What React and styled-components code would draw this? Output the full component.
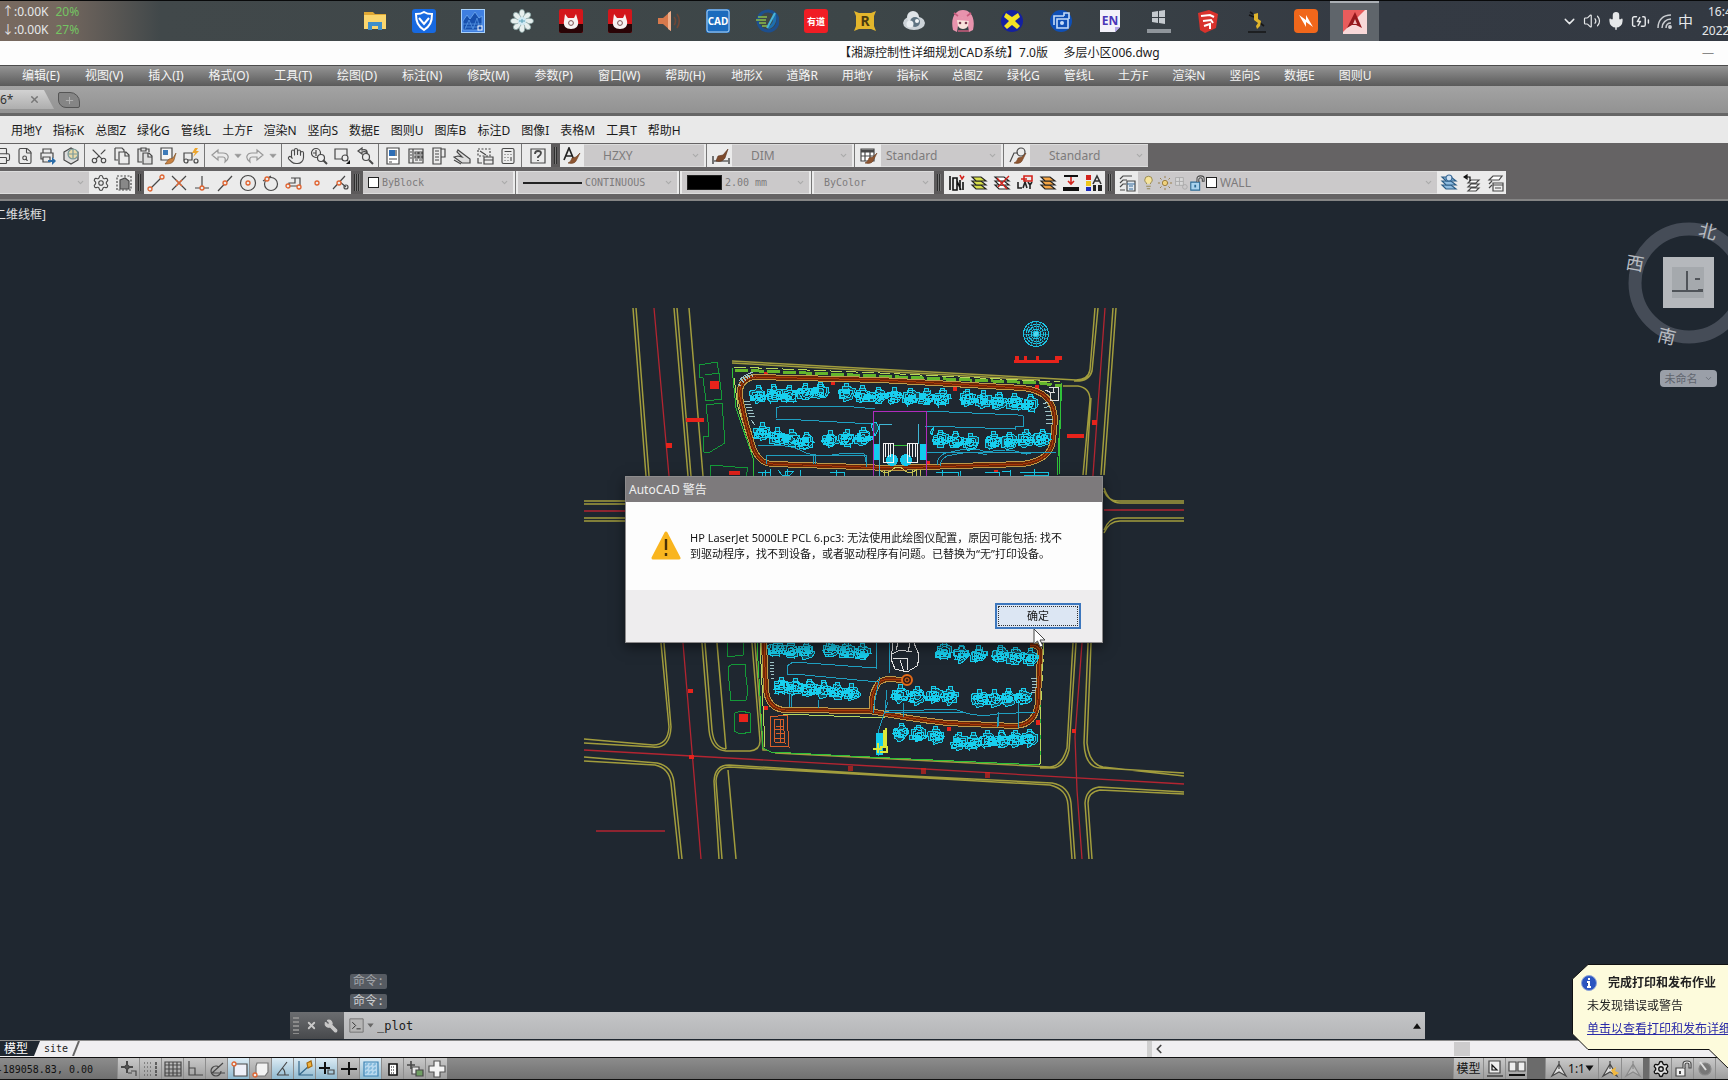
import React, { useState } from "react";
import styled, { createGlobalStyle, css } from "styled-components";
import {
  Printer,
  FileSearch,
  Scissors,
  Undo2,
  Redo2,
  Hand,
  Settings,
  Calculator,
  ChevronDown,
  ChevronLeft,
  Volume2,
  Mic,
  BatteryCharging,
  Wrench,
  X,
  Plus,
  LockOpen,
  Lightbulb,
  Sun,
} from "lucide-react";

const GlobalStyle = createGlobalStyle`
  * {
    box-sizing: border-box;
  }
  body {
    margin: 0;
    overflow: hidden;
    background: #1f2730;
    font-family: "Noto Sans", "Noto Sans CJK SC", sans-serif;
    font-size: 12px;
    line-height: 16px;
  }
  button, select, input {
    font: inherit;
    color: inherit;
    margin: 0;
    padding: 0;
    border: 0;
    background: none;
    border-radius: 0;
  }
  svg {
    display: block;
    flex: none;
  }
`;

const Page = styled.div`
  display: flex;
  flex-direction: column;
  height: 100vh;
  overflow: hidden;
`;

/* ---------- taskbar ---------- */

const Taskbar = styled.header`
  display: flex;
  flex: none;
  height: 41px;
  border-top: 1px solid #08090a;
  color: #e6e8ea;
  background: linear-gradient(90deg, #77695f 0, #75685f 60px, #41484a 160px, #3d4648 50%, #343a43 80%, #333942);
`;

const NetInfo = styled.div`
  width: 350px;
  padding: 2px 0 0 2px;
  line-height: 18px;
  white-space: pre;

  b {
    color: #74c462;
    font-weight: normal;
    padding-left: 7px;
  }
`;

const TaskButton = styled.button`
  display: flex;
  align-items: center;
  justify-content: center;
  width: 49px;
  ${(p) =>
    p.$active &&
    css`
      background: #5f656b;
      border-top: 2px solid #a9aeb4;
    `}
`;

const Tray = styled.div`
  display: flex;
  align-items: center;
  gap: 5px;
  margin-left: auto;
  font-size: 15px;
`;

const Clock = styled.div`
  width: 26px;
  margin-left: 4px;
  font-size: 12px;
  line-height: 19px;
  white-space: nowrap;

  div:first-child {
    padding-left: 6px;
  }
`;

/* ---------- window chrome ---------- */

const TitleBar = styled.div`
  display: flex;
  flex: none;
  height: 24px;
  line-height: 24px;
  padding: 0 16px 0 839px;
  background: #fdfdfd;
  color: #1b1b1b;
  white-space: pre;

  button {
    margin-left: auto;
    width: 10px;
    color: #888;
  }
`;

const MainMenu = styled.nav`
  display: flex;
  flex: none;
  gap: 26px;
  height: 21px;
  padding-left: 22px;
  border-top: 1px solid #4c4c4c;
  background: linear-gradient(#949494, #5a5a5a);
  color: #f4f4f4;
`;

const MenuGroup = styled.div`
  display: flex;
  gap: ${(p) => p.$gap}px;

  button {
    line-height: 18px;
    white-space: nowrap;
  }
`;

const FileTabs = styled.div`
  display: flex;
  flex: none;
  align-items: flex-end;
  height: 30px;
  padding-bottom: 4px;
  border-bottom: 3px solid #666;
  background: linear-gradient(#a3a3a3, #929292);
`;

const FileTab = styled.div`
  display: flex;
  align-items: center;
  gap: 16px;
  width: 54px;
  height: 19px;
  background: linear-gradient(#d2d2d2, #aeaeae);
  clip-path: polygon(0 0, 44px 0, 54px 100%, 0 100%);
  color: #333;
`;

const NewTab = styled.button`
  display: flex;
  align-items: center;
  justify-content: center;
  width: 22px;
  height: 16px;
  margin: 0 0 1px 4px;
  border: 1px solid #555 !important;
  border-radius: 2px 10px 2px 8px !important;
  background: #858585 !important;
  color: #b5b5b5 !important;
`;

const SubMenu = styled.nav`
  display: flex;
  flex: none;
  gap: 11px;
  height: 27px;
  padding: 2px 0 0 11px;
  background: #e9e9e9;
  color: #1a1a1a;

  button {
    white-space: nowrap;
  }
`;

const ToolArea = styled.div`
  display: flex;
  flex: none;
  flex-direction: column;
  gap: 4px;
  height: 58px;
  padding-top: 1px;
  border-bottom: 2px solid #858585;
  background: #656364;
`;

const ToolRow = styled.div`
  display: flex;
  height: 23px;
`;

const Bar = styled.div`
  display: flex;
  flex: none;
  height: 23px;
  margin-left: ${(p) => (p.$clipped ? "-10px" : 0)};
  background: #ebebeb;
`;

const Tool = styled.button`
  display: flex;
  align-items: center;
  justify-content: center;
  width: ${(p) => p.$w || 23}px;
  color: #4a4a4a;
  opacity: ${(p) => (p.disabled ? 0.5 : 1)};
`;

const Sep = styled.span`
  width: 5px;
  border-left: 2px solid #ebebeb;
  border-right: 2px solid #ebebeb;
  background: #777;
`;

const Grip = styled.span`
  flex: none;
  width: ${(p) => p.$w || 10}px;
  height: 23px;
  border: 3px solid #5c5a5b;
  background: repeating-linear-gradient(90deg, #2f2f2f 0 1px, #777 1px 2px);
`;

const ComboBox = styled.label`
  display: flex;
  align-items: center;
  flex: none;
  gap: 1px;
  width: ${(p) => p.$w}px;
  height: 23px;
  padding: 0 4px 0 ${(p) => p.$pad || 5}px;
  border-top: 1px solid #dcdcdc;
  border-bottom: 1px solid #dcdcdc;
  background: #cbc9ca;
  color: #7d7b7c;

  select {
    flex: 1;
    min-width: 0;
    appearance: none;
    font-family: ${(p) => (p.$mono ? '"DejaVu Sans Mono", monospace' : "inherit")};
    font-size: ${(p) => (p.$mono ? 10 : 12)}px;
  }
`;

const Swatch = styled.span`
  flex: none;
  width: ${(p) => p.$w}px;
  height: ${(p) => p.$h}px;
  margin-right: 2px;
  border: 1px solid #222;
  background: ${(p) => p.$color};
`;

function Combo({ label, value, children, ...rest }) {
  return (
    <ComboBox {...rest}>
      {children}
      <select aria-label={label} defaultValue={value}>
        <option>{value}</option>
      </select>
      <ChevronDown size={9} strokeWidth={3} color="#aaa" />
    </ComboBox>
  );
}

/* ---------- canvas ---------- */

const Canvas = styled.main`
  position: relative;
  display: flex;
  flex: 1;
  flex-direction: column;
  justify-content: space-between;
  min-height: 0;
  overflow: hidden;
  background: #1f2730;
`;

const ViewLabel = styled.div`
  display: flex;
  justify-content: flex-end;
  width: 46px;
  padding-top: 6px;
  overflow: hidden;
  white-space: nowrap;
  color: #e0e0e0;
`;

const Plan = styled.svg`
  position: absolute;
  left: 580px;
  top: 99px;
`;

const CubeBox = styled.svg`
  position: absolute;
  right: -32px;
  top: 9px;
`;

const UcsButton = styled.button`
  position: absolute;
  right: 11px;
  top: 169px;
  display: flex;
  align-items: center;
  justify-content: center;
  gap: 6px;
  width: 57px;
  height: 17px;
  border-radius: 4px !important;
  background: #9a9fa8 !important;
  color: #5f646d !important;
  font-size: 11px !important;
`;

const CommandDock = styled.div`
  position: relative;
  display: flex;
  flex-direction: column;
  align-items: flex-start;
  gap: 5px;
  padding: 0 303px 1px 290px;
`;

const History = styled.div`
  margin-left: 60px;
  padding: 0 3px 0 3px;
  height: 15px;
  border-radius: 2px;
  background: #565b62;
  color: ${(p) => (p.$dim ? "#a4a7ab" : "#cfd1d3")};
  line-height: 15px;
  font-family: "DejaVu Sans Mono", "Noto Sans CJK SC", monospace;
`;

const CommandBar = styled.div`
  display: flex;
  align-items: center;
  align-self: stretch;
  height: 27px;
  margin-top: -2px;
  background: linear-gradient(#c4c5c7, #b4b5b7);
`;

const CommandHandle = styled.div`
  display: flex;
  align-items: center;
  gap: 7px;
  width: 54px;
  height: 27px;
  padding-left: 3px;
  background: linear-gradient(#6b6d70, #47494c);
  color: #c8c8c8;
`;

const Dots = styled.span`
  width: 6px;
  height: 17px;
  background: repeating-linear-gradient(#8b8b8b 0 2px, transparent 2px 4px);
`;

const Prompt = styled.label`
  display: flex;
  flex: 1;
  align-items: center;
  gap: 3px;
  padding: 0 4px 0 5px;

  input {
    flex: 1;
    outline: none;
    color: #1c1c1c;
    font-family: "DejaVu Sans Mono", monospace;
  }
`;

/* ---------- layout tabs + status bar ---------- */

const LayoutStrip = styled.div`
  display: flex;
  flex: none;
  height: 17px;
  border-top: 1px solid #8a8a8a;
  background: #f0eff1;
`;

const LayoutTab = styled.button`
  width: ${(p) => p.$w}px;
  height: 15px;
  line-height: 14px !important;
  font-family: "DejaVu Sans Mono", "Noto Sans CJK SC", monospace !important;
  ${(p) =>
    p.$active
      ? css`
          background: #1f2730 !important;
          color: #fff !important;
          padding-right: 8px !important;
          clip-path: polygon(0 0, 100% 0, 34px 100%, 0 100%);
        `
      : css`
          font-size: 10px !important;
          color: #222 !important;
        `}
`;

const ScrollTrack = styled.div`
  display: flex;
  align-items: center;
  width: 581px;
  margin-left: auto;
  border-left: 5px solid #cfcfcf;
  color: #444;
`;

const Thumb = styled.span`
  width: 16px;
  height: 14px;
  margin-left: 288px;
  background: #cdcccd;
`;

const StatusBar = styled.footer`
  display: flex;
  flex: none;
  height: 23px;
  border-top: 1px solid #111;
  border-bottom: 1px solid #111;
  background: linear-gradient(#8c8c8c, #707070);
  color: #111;
`;

const Coords = styled.div`
  display: flex;
  justify-content: flex-end;
  width: 117px;
  padding-right: 24px;
  line-height: 24px;
  font-family: "DejaVu Sans Mono", monospace;
  font-size: 10px;
  white-space: pre;
`;

const StatusButton = styled.button`
  display: flex;
  align-items: center;
  justify-content: center;
  width: ${(p) => p.$w || 22}px;
  border-left: 1px solid #8d8d8d !important;
  background: ${(p) =>
    p.$on ? "linear-gradient(#dcebf4, #8fb9cf)" : "linear-gradient(#c9c9c9, #9d9d9d)"} !important;
`;

const Gap = styled.span`
  width: ${(p) => p.$w}px;
  background: #6b6b6b;
`;

const StatusRight = styled.div`
  display: flex;
  margin-left: auto;
`;

/* ---------- dialog, balloon ---------- */

const Overlay = styled.div`
  position: fixed;
  inset: 0;
  display: flex;
  align-items: center;
  justify-content: center;
  padding-top: 39px;
`;

const Dialog = styled.section`
  display: flex;
  flex-direction: column;
  width: 478px;
  border: 1px solid #8d8b8c;
  background: #fdfdfd;
  box-shadow: 0 4px 12px rgba(0, 0, 0, 0.5);
  color: #151515;

  h1 {
    margin: 0;
    padding: 0 3px;
    background: #7d7a7c;
    color: #f0f0f0;
    font-size: 12px;
    font-weight: normal;
    line-height: 25px;
  }
`;

const DialogBody = styled.div`
  display: flex;
  gap: 9px;
  padding: 28px 25px;

  svg {
    margin-top: 1px;
  }
  p {
    margin: 0;
    font-size: 11px;
    line-height: 16px;
    white-space: pre;
  }
`;

const DialogFooter = styled.div`
  display: flex;
  justify-content: flex-end;
  padding: 13px 21px;
  background: #eeedee;
`;

const OkButton = styled.button`
  width: 86px;
  height: 26px;
  border: 2px solid #3d77bd !important;
  background: #dce6f3 !important;
  outline: 1px dotted #333;
  outline-offset: -4px;
  font-size: 11px !important;
`;

const Cursor = styled.svg`
  position: absolute;
  left: 1033px;
  top: 628px;
`;

const Balloon = styled.aside`
  position: fixed;
  right: 0;
  bottom: 12px;
  width: 156px;
  height: 104px;
`;

const BalloonShape = styled.svg`
  position: absolute;
  left: 0;
  top: 0;
`;

const BalloonText = styled.div`
  position: relative;
  display: flex;
  flex-direction: column;
  gap: 7px;
  padding: 11px 0 0 15px;
  white-space: nowrap;
  overflow: hidden;
  color: #222;

  h2 {
    display: flex;
    align-items: center;
    gap: 11px;
    margin: 0 0 0 -6px;
    font-size: 12px;
    line-height: 16px;
  }
  p {
    margin: 0;
  }
  a {
    color: #2a2aa8;
  }
`;

/* ---------- icon drawings ---------- */

const Tile = ({ children, color, r = 3 }) => (
  <svg width="24" height="24" viewBox="0 0 24 24">
    {color && <rect width="24" height="24" rx={r} fill={color} />}
    {children}
  </svg>
);

const TileText = ({ size = 10, fill = "#fff", y = 16, children }) => (
  <text x="12" y={y} textAnchor="middle" fontSize={size} fontWeight="bold" fill={fill}>
    {children}
  </text>
);

const Bear = () => (
  <Tile color="#d3161b" r={2}>
    <path d="M0 15h24v7q0 2-2 2H2q-2 0-2-2z" fill="#2a0406" />
    <path d="M5 12l1-7 3 4h6l2-4 2 7c1 5-2 8-7 8s-8-3-7-8z" fill="#f7f2f2" />
    <circle cx="12" cy="14" r="2.4" fill="none" stroke="#7a5050" />
  </Tile>
);

const taskIcons = [
  ["文件资源管理器", <Tile><path d="M1 3h9l2 2h11v15H1z" fill="#e0a834" /><path d="M1 6h22v14H1z" fill="#fbd66e" /><path d="M5 21v-8h14v8h-4v-4H9v4z" fill="#3f8ecb" /></Tile>],
  ["电脑管家", <Tile color="#1769e0"><path d="M12 3c3 2 5 2 8 2 0 8-2 12-8 16-6-4-8-8-8-16 3 0 5 0 8-2z" fill="none" stroke="#fff" strokeWidth="2" /><path d="M7 9l5 6 5-6" fill="none" stroke="#fff" strokeWidth="2" /></Tile>],
  ["地形", <Tile color="#3f7fe0" r={0}><rect x=".5" y=".5" width="23" height="23" fill="none" stroke="#a9d2fb" /><path d="M2 21V12l4-6 3 4 5-7 4 6 3-2v9l-3 5z" fill="#1750ad" stroke="#79b3f2" strokeWidth=".7" /><path d="M4 20l4-9 4 9 4-11 3 11M2 15h19M4 18h16" fill="none" stroke="#5d9ee9" strokeWidth=".7" /><rect x="17" y="17" width="4" height="4" fill="#1750ad" stroke="#fff" /></Tile>],
  ["花瓣", <Tile>{[0, 45, 90, 135, 180, 225, 270, 315].map((a) => (<ellipse key={a} cx="12" cy="5" rx="2.8" ry="4.4" fill="#e6efee" stroke="#7f9c9c" strokeWidth=".7" transform={`rotate(${a} 12 12)`} />))}<circle cx="12" cy="12" r="4" fill="#cfe9f3" /><path d="M9 12h6M12 10v4" stroke="#59a0b5" /></Tile>],
  ["录屏", <Bear />],
  ["录屏大师", <Bear />],
  ["音量", <Tile><path d="M1 9h5l8-7v20l-8-7H1z" fill="#d8794c" /><path d="M11 4l3-2v20l-3-2z" fill="#f1b08c" /><path d="M17 8c2 2 2 6 0 8M20 5c3 4 3 10 0 14" fill="none" stroke="#704636" strokeWidth="1.6" /></Tile>],
  ["CAD", <Tile color="#1b6bbd" r={2}><rect x="1" y="1" width="22" height="22" rx="2" fill="none" stroke="#b6d7f4" /><TileText size={10}>CAD</TileText></Tile>],
  ["迅雷", <Tile><circle cx="13" cy="12" r="10" fill="none" stroke="#1d4f8e" strokeWidth="3" /><path d="M13 19c6-2 8-8 6-14" fill="none" stroke="#1d6fb0" strokeWidth="3" /><path d="M20 4L12 19" stroke="#49b5d8" strokeWidth="2" /><path d="M3 8h9M1 11h10M4 14h7M7 17h5" stroke="#8bbd4b" strokeWidth="1.6" /></Tile>],
  ["有道", <Tile color="#f01d24"><TileText size={9}>有道</TileText></Tile>],
  ["R", <Tile><path d="M1 2l5 2h12l5-2-2 5v10l2 5-5-2H6l-5 2 2-5V7z" fill="#e3b62c" /><TileText size={14} fill="#4a3b10" y={17}>R</TileText></Tile>],
  ["百度网盘", <Tile><ellipse cx="12" cy="14" rx="11" ry="7" fill="#ccd3d8" /><circle cx="11" cy="8" r="6" fill="#dfe4e8" /><circle cx="13" cy="13" r="5" fill="#5f7482" /><circle cx="8" cy="15" r="3.5" fill="#e9eef1" /><circle cx="15" cy="12" r="2" fill="#f3f6f8" /></Tile>],
  ["角色", <Tile><path d="M2 21C-1 8 5 1 12 1s13 7 10 20l-4 2-1-6H7l-1 6z" fill="#e893ad" /><path d="M6 11c2-3 10-3 12 0l-1 6c-2 4-8 4-10 0z" fill="#fae3dc" /><path d="M5 11l4-6 2 4 3-4 5 7" fill="#e893ad" /><circle cx="9" cy="14" r="1.3" fill="#7b3c50" /><circle cx="15" cy="14" r="1.3" fill="#7b3c50" /><path d="M3 4l4 3M20 4l-4 3M7 22h11" stroke="#c75b7c" strokeWidth="1.6" /></Tile>],
  ["工具X", <Tile><circle cx="12" cy="12" r="11" fill="#1420a0" /><path d="M6 4l6 4 6-4 2 4-5 4 5 5-3 3-5-4-5 4-3-3 5-5-5-4z" fill="#f4e223" /></Tile>],
  ["同步", <Tile><circle cx="12" cy="12" r="11" fill="#0f4fb5" /><path d="M5 16V7h10M8 10h11v9H8zM15 7V4h5v6" fill="none" stroke="#c5dbf8" strokeWidth="1.6" /><circle cx="13" cy="14" r="2" fill="#c5dbf8" /></Tile>],
  ["输入法", <Tile><path d="M2 1h20v17l-5 5H2z" fill="#f3f1fa" /><path d="M17 23v-5h5z" fill="#b4a5ea" /><TileText size={12} fill="#4a35b8">EN</TileText></Tile>],
  ["系统", <Tile><path d="M5 3l6-1v6H5zM12 2l6-1v7h-6zM5 9h6v5l-6-1zM12 9h6v6l-6-1z" fill="#c5cacf" /><rect y="20" width="24" height="4" fill="#8f959b" /></Tile>],
  ["SketchUp", <Tile><path d="M2 4l11-3 9 4-2 14-11 5-5-3z" fill="#d8322c" /><path d="M5 7l9-1 4 2M7 12l8-1 2 3M8 17l6-2v5" fill="none" stroke="#fff" strokeWidth="2" /></Tile>],
  ["脚本", <Tile><path d="M4 6l5 2M5 3l3 2M15 14l4 3M3 23h18" stroke="#161616" strokeWidth="1.6" /><path d="M9 5l4-1v6l3 2-1 5-3 3-1-3 2-3-4-3z" fill="#e1b52b" /></Tile>],
  ["视频", <Tile color="#f0671b" r={4}><path d="M5 6l7 5V6l7 12-7-5v5z" fill="#fff" /></Tile>],
  ["AutoCAD", <Tile color="#e95c5c" r={0}><path d="M0 22L22 0h2v24H0z" fill="#f8d8d8" /><path d="M12 2l7 16-6-3H9l-5 3z" fill="#96181c" /><path d="M12 9l2 5h-4z" fill="#f0b9b9" /></Tile>],
];

const Ico = ({ children, s = 18, ...rest }) => (
  <svg width={s} height={s} viewBox="0 0 18 18" fill="none" stroke="#484848" strokeWidth="1.2" {...rest}>
    {children}
  </svg>
);

const Node = ({ x, y, r = 2 }) => <circle cx={x} cy={y} r={r} fill="#ebebeb" stroke="#e0632f" strokeWidth="1.3" />;

const Brush = () => <path d="M17 6l-4 4-4 1c-1 3-2 4-4 5 4 1 7 0 8-2l4-8z" fill="#8e5530" stroke="#6a3c1e" strokeWidth=".6" />;

const Layers = ({ fill = "#fff", stroke = "#222", children }) => (
  <Ico>
    {[11, 7, 3].map((y) => (
      <path key={y} d={`M2 ${y}h9l5 4H6z`} fill={fill} stroke={stroke} />
    ))}
    {children}
  </Ico>
);

const openSnaps = [
  ["端点", <Ico><path d="M4 14L14 4" /><Node x={3} y={15} /><Node x={15} y={3} /></Ico>],
  ["交点", <Ico><path d="M2 2l14 14M16 2L2 16" /><path d="M6 6l6 6M12 6l-6 6" stroke="#e0632f" /></Ico>],
  ["垂足", <Ico><path d="M9 2v12M2 14h14" /><Node x={9} y={14} /></Ico>],
  ["中点", <Ico><path d="M2 17L16 2" /><Node x={9} y={9} /></Ico>],
  ["圆心", <Ico><circle cx="9" cy="9" r="7.5" /><Node x={9} y={9} /></Ico>],
  ["切点", <Ico><circle cx="9" cy="10" r="6.5" /><path d="M1 7l8-5" /><Node x={5} y={5} /></Ico>],
  ["插入点", <Ico><path d="M6 4h9v8H4V9h6V4" /><Node x={3} y={12} /><Node x={14} y={13} /></Ico>],
  ["节点", <Ico><Node x={9} y={9} /></Ico>],
  ["最近点", <Ico><path d="M2 15L14 2M9 8l6 5" /><Node x={8} y={9} /><circle cx="15" cy="13" r="2" /></Ico>],
];

const layerTools = [
  ["图层表", <Ico stroke="#111" strokeWidth="1.6"><path d="M3 2v14M6 4h4v12H6zM13 6v10M16 8v8M10 7l4 9" /><path d="M13 1l2 4 2-3" stroke="#d3231c" /></Ico>],
  ["图层", <Layers fill="#d9e04b" />],
  ["关闭图层", <Layers><path d="M4 4l10 11M16 2L5 13" stroke="#d3231c" strokeWidth="1.4" /></Layers>],
  ["锁定", <Ico stroke="#222"><path d="M2 8v6h4M7 14l2-6 2 6M12 8l2 3 2-3M14 11v4" strokeWidth="1.6" /><path d="M8 2h8v5H8zM5 5h6" stroke="#d3231c" strokeWidth="1.6" /></Ico>],
  ["合并", <Layers fill="#f5a646" />],
  ["下移", <Ico><path d="M2 2h14" stroke="#111" strokeWidth="2" /><path d="M9 3v7M6 7l3 3 3-3" stroke="#d3231c" strokeWidth="1.6" /><path d="M1 15h16" stroke="#111" strokeWidth="4" /></Ico>],
  ["颜色", <Ico stroke="none"><path d="M1 1h5v5H1z" fill="#d3231c" /><path d="M1 7h5v5H1z" fill="#eec51a" /><path d="M1 13h5v4H1z" fill="#1b2ab8" /><path d="M8 11h3v6H8zM13 11h4v6h-4z" fill="#222" /><path d="M8 10l4-8 4 8M10 7h4" stroke="#333" strokeWidth="1.6" /></Ico>],
];

const statusTools = [
  ["推断约束", 0, <Ico><path d="M7 1v12M1 7h12" strokeWidth="2" /><path d="M11 11h5v5M8 13h4" /><circle cx="7" cy="7" r="2" fill="#555" /></Ico>],
  ["捕捉", 0, <Ico><path d="M2 3h9M2 7h9M2 11h9M2 15h9" strokeDasharray="1 2" /><path d="M14 2v14" strokeWidth="1.6" strokeDasharray="3 1" /></Ico>],
  ["栅格", 0, <Ico><path d="M1 2h16v14H1zM5 2v14M9 2v14M13 2v14M1 5h16M1 9h16M1 13h16" /></Ico>],
  ["正交", 0, <Ico><path d="M3 1v14h14M3 8h6v7" /></Ico>],
  ["极轴", 0, <Ico><path d="M3 13h14M4 13L15 3" /><circle cx="8" cy="11" r="5" strokeDasharray="26 6" /></Ico>],
  ["对象捕捉", 1, <Ico><path d="M4 4h13v12H4z" fill="#eef0f8" /><Node x={4} y={4} /></Ico>],
  ["三维对象捕捉", 0, <Ico><path d="M5 3h11v9l-3 4H4V6z" fill="#f3f3f3" stroke="#777" /><Node x={3} y={15} /></Ico>],
  ["对象追踪", 1, <Ico><path d="M3 15L13 2M3 15h12M8 8c2 1 3 4 3 7" /></Ico>],
  ["动态UCS", 1, <Ico><path d="M3 1v14h14M3 15l10-9" stroke="#35688a" /><path d="M11 3l4-2 1 5-4 2z" fill="#efb23c" stroke="#a86a10" /></Ico>],
  ["动态输入", 1, <Ico><path d="M7 2v12M1 8h11" stroke="#111" strokeWidth="2" /><path d="M10 10h6v4h-6z" /></Ico>],
  ["线宽", 0, <Ico><path d="M9 2v13M1 9h16" stroke="#111" strokeWidth="2" /></Ico>],
  ["透明度", 1, <Ico><path d="M2 2h14v14H2z" fill="#b7d8ee" stroke="#3c83b3" /><path d="M3 5h12M3 9h12M3 13h12M5 3v12M9 3v12M13 3v12" stroke="#6faed6" strokeDasharray="2 2" /></Ico>],
  ["快捷特性", 0, <Ico><path d="M5 4h8v11H5z" fill="#fff" stroke="#111" strokeWidth="1.6" /><path d="M7 7h4M7 10h4M7 13h4" stroke="#111" strokeDasharray="1 1" /></Ico>],
  ["选择循环", 0, <Ico><path d="M5 1v8M1 5h8" strokeWidth="1.6" /><path d="M6 7h7v7H6z" fill="#e9e9e9" /><path d="M10 10h7v6h-7z" fill="#6f9e63" /></Ico>],
  ["注释监视器", 0, <Ico><path d="M6 1h6v5h5v6h-5v5H6v-5H1V6h5z" fill="#f4f4f4" stroke="#555" /></Ico>],
];

/* ---------- site plan ---------- */

function makeRandom(seed) {
  let s = seed;
  return () => {
    s = (s * 16807) % 2147483647;
    return s / 2147483647;
  };
}

// a row of housing units between two points, each one a tangle of plan linework
function housingPath(x1, y1, x2, y2, seed) {
  const rnd = makeRandom(seed);
  const count = Math.max(2, Math.round((x2 - x1) / 15));
  const step = (x2 - x1) / count;
  let d = "";
  for (let i = 0; i < count; i++) {
    const cx = x1 + step * (i + 0.5);
    const cy = y1 + ((y2 - y1) * (i + 0.5)) / count + (rnd() - 0.5) * 2;
    [
      [8, 7],
      [6, 5],
      [3, 3],
    ].forEach(([rx, ry]) => {
      for (let k = 0; k < 16; k++) {
        const a = (k / 16) * Math.PI * 2;
        const j = 0.8 + rnd() * 0.4;
        const px = Math.round(cx + Math.cos(a) * rx * j);
        const py = Math.round(cy + Math.sin(a) * ry * j);
        d += k === 0 ? `M${px} ${py}` : k % 2 ? `H${px}V${py}` : `L${px} ${py}`;
      }
      d += "z";
    });
    // rooms
    for (let k = 0; k < 6; k++) {
      const px = Math.round(cx - 8 + rnd() * 12);
      const py = Math.round(cy - 5 + rnd() * 7);
      d += `M${px} ${py}h${2 + Math.round(rnd() * 3)}v3h-4z`;
    }
    d += `M${Math.round(cx - 2)} ${Math.round(cy - 6)}v-4h4v4`;
  }
  return d;
}

const housing = [
  [750, 397, 828, 391],
  [838, 394, 950, 399],
  [959, 399, 1038, 404],
  [755, 432, 813, 443],
  [822, 442, 871, 436],
  [932, 440, 978, 443],
  [985, 443, 1050, 437],
  [768, 649, 813, 651],
  [822, 650, 870, 654],
  [935, 652, 987, 656],
  [993, 655, 1037, 659],
  [774, 687, 858, 693],
  [892, 695, 958, 697],
  [972, 700, 1030, 698],
  [892, 733, 944, 738],
  [952, 743, 1036, 739],
];

const yellowRoads = [
  "M633 308L646 476M636 308L649 476M674 308L688 476M677 308L691 476M689 308L703 476",
  "M584 501H626M584 504H626M584 518H626M584 521H626",
  "M661 643L669 727Q668 745 653 745L584 739M664 643L671 727Q670 749 653 747L584 743",
  "M702 643L709 730Q711 750 726 751H750Q760 750 760 741L752 643M705 643L712 730Q714 748 726 749M717 643L726 749M755 643L763 750H767",
  "M584 757L657 763Q672 766 674 782L682 859M584 761L655 765Q669 768 671 783L679 859",
  "M722 859L716 781Q717 767 730 767L1050 785Q1067 789 1068 805L1072 859M719 859L714 781Q715 765 729 765L890 775L1052 783Q1069 786 1071 803L1075 859M728 770L736 859",
  "M1073 643L1067 748Q1062 766 1050 767L775 753M1076 643L1069 750Q1064 769 1050 768H1040",
  "M1088 643L1084 743Q1085 768 1101 768L1184 773M1091 643L1087 743Q1089 764 1103 767L1184 776",
  "M1184 792L1099 787Q1086 789 1085 803L1089 859M1184 794L1100 790Q1088 792 1088 803L1092 859",
  "M1095 308L1090 370Q1088 380 1076 380L1040 378L732 361M1098 308L1092 371Q1089 382 1074 381",
  "M1063 386H1078Q1090 388 1090 400L1083 475M1091 398L1086 475M1113 308L1101 475M1116 308L1104 475",
  "M1104 491Q1108 501 1118 501H1184M1104 488Q1109 503 1120 503H1184M1104 530Q1109 518 1118 518H1184M1104 533Q1109 521 1120 521H1184",
  "M732 363L1040 380",
];

const loopRoads = [
  "M755 377Q738 379 740 397L745 420L753 447Q759 464 773 464L890 468L1023 464Q1051 460 1053 440L1055 420Q1054 391 1023 388L880 380Z",
  "M764 643L766 690Q768 709 785 710L870 711Q910 719 947 723L1015 726Q1037 725 1038 700L1040 652Q1040 645 1030 645",
  "M872 711Q870 697 876 687Q879 679 890 679L902 680",
];

function SitePlan() {
  return (
    <Plan width="610" height="570" viewBox="580 300 610 570" fill="none" shapeRendering="crispEdges">
      <g stroke="#a29d3d" strokeWidth="1.5" shapeRendering="auto">
        {yellowRoads.map((d) => (
          <path key={d} d={d} />
        ))}
      </g>
      <g stroke="#b32531" strokeWidth="1.3" shapeRendering="auto">
        <path d="M654 308L669 476L683 643L701 859M584 511H626M1104 510H1184M584 750L890 767L1184 784" />
        <path d="M1105 308L1093 475L1082 643L1075 737L1077 790L1082 859M596 831H665" />
      </g>
      <g fill="#e8231b">
        <path d="M686 418h18v4h-18zM710 381h9v8h-9zM729 471h11v4h-11zM1067 434h17v4h-17zM739 714h9v8h-9zM764 706h4v4h-4z" />
        <path d="M1014 360h45v3h-45zM1015 356h4v5h-4zM1024 356h3v5h-3zM1036 356h3v5h-3zM1055 356h7v4h-7zM666 443h6v5h-6zM688 689h5v4h-5zM689 755h5v4h-5z" />
        <path d="M764 372h4v4h-4zM831 381h4v4h-4zM953 387h4v4h-4zM1035 385h4v4h-4zM1092 420h5v5h-5zM1072 729h4v4h-4zM947 727h4v4h-4zM1036 720h4v5h-4zM994 470h4v3h-4zM927 461h3v3h-3z" />
        <path d="M848 766h5v5h-5zM921 768h5v6h-5zM985 772h5v6h-5z" opacity=".6" />
      </g>
      <g stroke="#149a38">
        <path d="M699 365l18-3 2 11 3 26-16 2-3-23-4-1zM705 375l14-2M706 405l16-2 3 40-15 9h-6l-1-15 6-1-1-14zM710 465l38 3-2 8h-36z" />
        <path d="M727 643l1 14 15-2 1-12M728 667l5-3h12v6l3 22-2 8-15 1-2-20zM735 713l6-2 9 2 1 19-11 2-6-3z" />
        <path d="M732 368L736 408L753 458V476M757 643L763 748L771 752L890 758L1040 765M1041 650L1040 765M1062 383L1057 475M1061 384L1059 475" stroke="#2fc23a" />
      </g>
      <path d="M735 370L1040 383L1062 386" stroke="#63b52c" strokeWidth="3" strokeDasharray="13 3" />
      <path d="M734 367L880 373L1060 382M1044 643L1041 700L1040 765" stroke="#b9d65c" strokeDasharray="12 4" />
      <path d="M734 378L738 407L752 452M760 643L765 747M783 714L885 718" stroke="#b9d65c" />
      <g stroke="#bf9a48" strokeWidth="6">
        {loopRoads.map((d) => (
          <path key={d} d={d} />
        ))}
      </g>
      <g stroke="#6e2608" strokeWidth="4">
        {loopRoads.map((d) => (
          <path key={d} d={d} />
        ))}
      </g>
      <g stroke="#a83a08">
        {loopRoads.map((d) => (
          <path key={d} d={d} />
        ))}
      </g>
      <g shapeRendering="auto">
        <circle cx="907" cy="680" r="5" fill="#3a1c12" stroke="#e26a18" strokeWidth="2" />
        <circle cx="907" cy="680" r="2" stroke="#e26a18" />
      </g>
      <g stroke="#d85f2a">
        <path d="M770 717l17-2 2 32-19-1zM774 720l9-1 2 24-10-1zM776 726h7M776 733h8M780 720v22M774 729h9M775 738h9" />
      </g>
      <g stroke="#1f9fc0">
        <path d="M776 408l6-2h62l31 3M776 408v10M776 419h7l90 5M926 411l92 4 5 1v10h-8v3l-90-3M926 452h130" />
        <path d="M758 446q30-3 44 5t42 2l20 1q3 8 2 13M766 455h101M766 455v9M813 454v10M815 454v10M866 455v12M937 465q1-12 14-13q20-6 36 0q22-4 32 0q8 4 14 0M940 466q1-10 12-11q20-5 35 0" />
        <path d="M787 666l6-4 83 6V643M787 666v8h7l84 8M889 643v30M880 677q-5 20-7 36M887 690l-2 20 28 1q30-3 44-1q20 8 40 4l38-2M885 713l80-1M997 717v10M998 712v14" />
        <path d="M888 702l-10 30v24M1018 700v28M789 694v13M791 694v13M818 700v8M903 703v14" />
      </g>
      <g stroke="#18cfee" fill="rgba(24, 207, 238, 0.22)" fillRule="evenodd">
        {housing.map((h, i) => (
          <path key={i} d={housingPath(...h, 1301 + i * 977)} />
        ))}
        <path d="M871 425l5-3 3 6-4 8zM930 432l4-5-2 8z" />
      </g>
      <path
        d="M758 472h12v4h-8v-3M778 470l4 5h8l4-4h-9v5M800 470v6M830 472h14v4M836 470v6M936 472h22v4M960 471v5M985 472h14v4M1010 470v6M1020 472h28v3h-24M765 470v6M770 469v7M787 469v7M1034 469v7M1002 471h9M942 470v6"
        stroke="#18cfee"
      />
      <g fill="#12cbee">
        <path d="M873 444h6v16h-6zM920 444h6v16h-6zM876 733h7v22h-7z" />
        <circle cx="892" cy="460" r="6" />
        <circle cx="906" cy="460" r="6" />
      </g>
      <path d="M879 476V424h13M918 424v20M888 456l8 8M888 464l8-8M902 456l8 8M902 464l8-8" stroke="#3fb6d4" />
      <path d="M893 445h14" stroke="#35c43a" />
      <path d="M883 443h10v19h-10zM885 443v14M888 443v14M890 443v14M907 443h10v19h-10zM909 443v14M912 443v14M915 443v14" stroke="#f2f2f2" />
      <path d="M873 476V411H926V476" stroke="#b02cbd" />
      <path d="M880 470q6 6 12 0t12 0t12 0v6M884 470v6M888 471v5M912 470v6M920 470v6" stroke="#d0cf58" />
      <path d="M893 643l-2 16 4 10 12 3 10-6q4-10-1-18l-2-5M892 654l8-4 12 2M900 660l4 12M896 650l2-7M908 652l2-9M893 658h14v12" stroke="#e3e3e3" />
      <path d="M873 749h9M878 743v10M880 747h7v5h-7M884 730v16M886 728v18" stroke="#dbe838" strokeWidth="2" />
      <path d="M1049 388l9-1 1 13-9 1v-9l-5-2M1049 392h6M1053 387v5" stroke="#dddddd" />
      <path d="M739 381q4-6 14-9M743 377l3 4M747 374l3 4M738 384l3 2M750 372l3 5M741 379l3 4M745 375l3 4M744 402l6-1M745 405l6-1M746 408l6-1M747 411l6-1M748 414l6-1M749 417l6-1M751 420l4 5M770 662h4M770 665h4M770 668h4M770 671h4M771 674h3M771 678h3" stroke="#9fc3c7" />
      <path d="M1043 404l5-2M1044 408l6-2M1045 412l6-1M1046 416l6-1M1046 420l7-1M1046 424l7-1M1031 678h6M1032 681h5M1032 684h5M1032 687h5M1032 690h4M1031 692h4" stroke="#9fc3c7" />
      <g stroke="#1cc4e4">
        <circle cx="1036" cy="334" r="12.5" />
        <circle cx="1036" cy="334" r="10" strokeDasharray="3 1" />
        <circle cx="1036" cy="334" r="7.5" strokeDasharray="2 1" />
        <circle cx="1036" cy="334" r="5" />
        <circle cx="1036" cy="334" r="2.5" fill="#a8eaf4" />
        <path d="M1036 322v24M1024 334h24M1028 326l16 16M1044 326l-16 16M1031 323l10 22M1041 323l-10 22M1025 329l22 10M1025 339l22-10" opacity=".6" />
      </g>
    </Plan>
  );
}

function ViewCube() {
  return (
    <CubeBox width="150" height="150" viewBox="1610 210 150 150">
      <circle cx="1689" cy="283" r="54" fill="none" stroke="#454c57" strokeWidth="13" />
      <g fill="#b8bcc2" fontSize="18" textAnchor="middle">
        <text x="1708" y="238" transform="rotate(14 1708 231)">北</text>
        <text x="1635" y="270" transform="rotate(10 1635 263)">西</text>
        <text x="1667" y="343" transform="rotate(14 1667 336)">南</text>
      </g>
      <rect x="1663" y="257" width="51" height="51" fill="#b5b8bc" />
      <rect x="1672" y="267" width="32" height="31" fill="#a5a9ad" />
      <path d="M1687 271v20M1672 291h31M1695 279h5M1698 290h5" stroke="#505459" strokeWidth="2" />
    </CubeBox>
  );
}

/* ---------- page ---------- */

const mainMenu = [
  "编辑(E)", "视图(V)", "插入(I)", "格式(O)", "工具(T)", "绘图(D)",
  "标注(N)", "修改(M)", "参数(P)", "窗口(W)", "帮助(H)",
];

const planMenu = [
  "地形X", "道路R", "用地Y", "指标K", "总图Z", "绿化G",
  "管线L", "土方F", "渲染N", "竖向S", "数据E", "图则U",
];

const subMenu = [
  "用地Y", "指标K", "总图Z", "绿化G", "管线L", "土方F", "渲染N", "竖向S", "数据E",
  "图则U", "图库B", "标注D", "图像I", "表格M", "工具T", "帮助H",
];

const lucide = { size: 18, strokeWidth: 1.5 };

function StandardBar() {
  return (
    <ToolRow>
      <Bar $clipped>
        <Tool aria-label="打印"><Printer {...lucide} /></Tool>
        <Tool aria-label="打印预览"><FileSearch {...lucide} /></Tool>
        <Tool aria-label="发布"><Ico><path d="M4 6V2h8v4M4 12H2V6h12v5M4 10h7v5H4z" /><path d="M9 13h4v-3l4 4-4 4v-3H9z" fill="#2b6ca8" stroke="none" /></Ico></Tool>
        <Tool aria-label="三维打印"><Ico><path d="M2 5l7-4 7 4v8l-7 4-7-4z" fill="#ddd" /><circle cx="11" cy="7" r="5" fill="#e9d9a8" stroke="#7a9a9a" /><path d="M11 2v10M6 7h10" stroke="#7a9a9a" /></Ico></Tool>
        <Sep />
        <Tool aria-label="剪切"><Scissors {...lucide} style={{ rotate: "-90deg" }} /></Tool>
        <Tool aria-label="复制"><Ico><path d="M2 1h7l2 2v2M2 1v12h3M6 5h7l3 3v9H6zM12 5v4h4" /></Ico></Tool>
        <Tool aria-label="粘贴"><Ico><path d="M5 2H2v13h4M5 1h5v3H5zM10 2h3v3M7 6h6l3 3v8H7zM12 6v4h4" fill="#ddd" /></Ico></Tool>
        <Tool aria-label="特性匹配"><Ico><path d="M2 1h11v12H2z" fill="#f4f4f4" /><path d="M4 3h5v5H4z" fill="#3d7ab8" stroke="none" /><path d="M17 6l-3 5-4 1-4 5c5 0 8-1 9-4z" fill="#c98242" stroke="#7a4a1c" strokeWidth=".6" /></Ico></Tool>
        <Tool aria-label="块编辑器"><Ico><path d="M2 6h8v7H2z" /><path d="M13 1l-3 5h3l-2 4 6-6h-3l2-3z" fill="#eda52d" stroke="none" /><circle cx="4" cy="14" r="2" fill="#eee" /><circle cx="14" cy="14" r="2" fill="#eee" /></Ico></Tool>
        <Sep />
        <Tool $w={26} disabled aria-label="放弃"><Ico><path d="M7 3L1 8l6 5v-3h5q3 0 2 5 4-3 3-6-1-3-5-3H7z" /></Ico></Tool>
        <Tool $w={10} disabled aria-label="放弃列表"><Ico s={8}><path d="M2 5h14l-7 8z" fill="#444" /></Ico></Tool>
        <Tool $w={24} disabled aria-label="重做"><Ico><path d="M11 3l6 5-6 5v-3H6q-3 0-2 5-4-3-3-6 1-3 5-3h5z" /></Ico></Tool>
        <Tool $w={12} disabled aria-label="重做列表"><Ico s={8}><path d="M2 5h14l-7 8z" fill="#444" /></Ico></Tool>
        <Sep />
        <Tool aria-label="平移"><Hand {...lucide} /></Tool>
        <Tool aria-label="实时缩放"><Ico><circle cx="6" cy="6" r="4.5" /><path d="M6 3v6M3 6h3" /><circle cx="11" cy="11" r="3.5" fill="#eee" /><path d="M13 13l4 4" strokeWidth="2" /></Ico></Tool>
        <Tool aria-label="窗口缩放"><Ico><path d="M10 12H2V2h12v7" /><circle cx="12" cy="11" r="3" fill="#eee" /><path d="M14 13l1 1" /><path d="M17 13v4h-4z" fill="#111" stroke="none" /></Ico></Tool>
        <Tool aria-label="缩放上一个"><Ico><path d="M6 1L2 4l4 3V5c3-1 5 0 5 2 1-4-2-5-5-4z" fill="#ddd" /><circle cx="10" cy="10" r="3.5" /><path d="M13 13l4 4" strokeWidth="2" /></Ico></Tool>
        <Sep />
        <Tool aria-label="特性"><Ico><path d="M3 1h12v16H3z" fill="#fff" /><path d="M5 3h6v6H5z" fill="#2f6eb5" stroke="none" /><path d="M5 12h8M5 15h3M12 3v6" /></Ico></Tool>
        <Tool aria-label="设计中心"><Ico><path d="M2 2h14v14H2zM6 2v14M8 5h3v2H8zM12 5h3v2h-3zM8 9h3v2H8zM12 9h3v2h-3zM8 13h3M12 13h3M3 5h2M3 8h2M3 11h2" /></Ico></Tool>
        <Tool aria-label="工具选项板"><Ico><path d="M3 1h8v16H3zM11 2h4v8h-4M5 4h4M5 7h4M5 10h4M5 13h4" /></Ico></Tool>
        <Tool aria-label="图纸集"><Ico><path d="M1 10l8 6h8v-4L9 6 5 3l-1 2 5 5-4-1z" fill="#ddd" /><path d="M1 13l7 4" /></Ico></Tool>
        <Tool aria-label="标记集"><Ico><path d="M2 2h12v7H2z" strokeDasharray="2 1.5" /><path d="M2 11v5h4M8 10h9v7H8zM8 13h9M4 4l6 4" /></Ico></Tool>
        <Tool aria-label="计算器"><Calculator {...lucide} /></Tool>
        <Sep />
        <Tool $w={27} aria-label="帮助"><Ico><path d="M2 2h14v14H2z" /><path d="M6 7q0-3 3-3t3 2-3 4v1M9 13v1" strokeWidth="1.8" /></Ico></Tool>
      </Bar>
      <Grip $w={9} />
      <Bar>
        <Tool $w={24} aria-label="文字样式"><Ico stroke="#222"><path d="M1 13L6 1l5 12M3 9h6" strokeWidth="1.7" /><Brush /></Ico></Tool>
        <Combo label="文字样式" value="HZXY" $w={120} $pad={19} />
        <Sep />
        <Tool aria-label="标注样式"><Ico><path d="M1 9v8M17 11v6M2 14h14" stroke="#222" /><path d="M16 2l-5 6-5 1-2 5c4 1 7 0 9-3z" fill="#7d4a2c" stroke="#5a331c" strokeWidth=".6" /></Ico></Tool>
        <Combo label="标注样式" value="DIM" $w={120} $pad={19} />
        <Sep />
        <Tool $w={24} aria-label="表格样式"><Ico><path d="M1 2h13v12H1z" fill="#fff" /><path d="M1 4h13" strokeWidth="3" /><path d="M1 9h13M5 4v10M10 4v10" /><Brush /></Ico></Tool>
        <Combo label="表格样式" value="Standard" $w={120} />
        <Sep />
        <Tool $w={24} aria-label="多重引线样式"><Ico><path d="M1 15l4-9h4" /><circle cx="12" cy="5" r="4" /><Brush /></Ico></Tool>
        <Combo label="引线样式" value="Standard" $w={118} $pad={19} />
      </Bar>
    </ToolRow>
  );
}

function PropertyBar() {
  return (
    <ToolRow>
      <Bar>
        <Combo label="工作空间" value="" $w={89} />
        <Tool aria-label="工作空间设置"><Settings {...lucide} /></Tool>
        <Tool aria-label="我的工作空间"><Ico><path d="M2 2h14v14H2z" strokeDasharray="2 1.5" /><path d="M5 6l5-2 4 3v8H5z" fill="#888" /></Ico></Tool>
      </Bar>
      <Grip $w={9} />
      <Bar>
        {openSnaps.map(([name, icon]) => (
          <Tool key={name} aria-label={name}>{icon}</Tool>
        ))}
      </Bar>
      <Grip $w={12} />
      <Bar>
        <Combo label="颜色" value="ByBlock" $w={150} $mono>
          <Swatch $w={11} $h={11} $color="#fff" />
        </Combo>
        <Sep />
        <Combo label="线型" value="CONTINUOUS" $w={159} $mono>
          <Swatch $w={59} $h={1} $color="#333" />
        </Combo>
        <Sep />
        <Combo label="线宽" value="2.00 mm" $w={127} $mono>
          <Swatch $w={35} $h={15} $color="#000" />
        </Combo>
        <Sep />
        <Combo label="打印样式" value="ByColor" $w={120} $pad={10} $mono />
      </Bar>
      <Grip />
      <Bar>
        {layerTools.map(([name, icon]) => (
          <Tool key={name} aria-label={name}>{icon}</Tool>
        ))}
      </Bar>
      <Grip />
      <Bar>
        <Tool aria-label="图层特性"><Ico><path d="M2 5l3-3h9M2 9l3-3h4M2 13l3-3h3M2 16h5" /><path d="M9 7h8v10H9z" fill="#dfe8f0" /><path d="M9 10h8M11 12h4M11 15h4" stroke="#3d6c9a" /></Ico></Tool>
        <Combo label="图层" value="WALL" $w={299} $pad={3}>
          <Lightbulb size={15} strokeWidth={1.3} color="#8a7a3c" fill="#f5e39a" />
          <Sun size={16} strokeWidth={1.3} color="#927538" fill="#f0d27c" />
          <Ico s={14} stroke="#aaa"><path d="M2 2h10v10H2zM7 2v10M2 7h10" fill="#d8d8d8" /><circle cx="14" cy="14" r="3" /></Ico>
          <Ico s={16}><path d="M2 8h10v9H2z" fill="#a9d3ee" stroke="#2c6a94" /><path d="M7 11v3" stroke="#2c6a94" strokeWidth="2" /><path d="M9 8V4q0-3 4-3t4 3v3h-2V5q0-2-2-2t-2 2v3" fill="#ddd" /></Ico>
          <Swatch $w={11} $h={11} $color="#fff" />
        </Combo>
        <Tool aria-label="置为当前"><Layers fill="#8fbce0" stroke="#2c5d86"><circle cx="9" cy="4" r="3" fill="#cfe2f3" stroke="#3b6c99" /></Layers></Tool>
        <Tool aria-label="上一个图层"><Ico><path d="M5 9l3-3h8l-3 3zM5 13l3-3h8l-3 3zM5 17l3-3h8l-3 3z" fill="#fff" /><path d="M1 3h6v4M1 3l3-2v4z" stroke="#111" /></Ico></Tool>
        <Tool aria-label="图层状态"><Ico><path d="M3 6l4-4h9l-3 4zM3 10l3-3M3 14l3-3M3 6v0h5" fill="#fff" /><path d="M7 9h10v8H7z" fill="#eee" /><path d="M7 11h10M9 14h6" /></Ico></Tool>
      </Bar>
    </ToolRow>
  );
}

function App() {
  const [warningOpen, setWarningOpen] = useState(true);
  const [command, setCommand] = useState("_plot");

  return (
    <Page>
      <GlobalStyle />
      <Taskbar>
        <NetInfo>
          <div>↑:0.00K<b>20%</b></div>
          <div>↓:0.00K<b>27%</b></div>
        </NetInfo>
        {taskIcons.map(([name, icon]) => (
          <TaskButton key={name} aria-label={name} $active={name === "AutoCAD"}>
            {icon}
          </TaskButton>
        ))}
        <Tray>
          <ChevronDown size={17} strokeWidth={2} />
          <Volume2 size={18} strokeWidth={1.6} />
          <Mic size={20} strokeWidth={1.8} fill="#e6e8ea" />
          <BatteryCharging size={19} strokeWidth={1.8} />
          <Ico s={18} stroke="#c9ccd0" strokeWidth="1.5">
            <path d="M3 16C3 8 8 3 16 3M7 16c0-5 4-9 9-9M11 16c0-3 2-5 5-5" />
            <circle cx="15" cy="15" r="1.2" fill="#e6e8ea" />
          </Ico>
          <span>中</span>
          <Clock>
            <div>16:4</div>
            <div>2022</div>
          </Clock>
        </Tray>
      </Taskbar>
      <TitleBar>
        <span>【湘源控制性详细规划CAD系统】7.0版{"     "}多层小区006.dwg</span>
        <button aria-label="最小化">—</button>
      </TitleBar>
      <MainMenu>
        <MenuGroup $gap={25}>
          {mainMenu.map((m) => (
            <button key={m}>{m}</button>
          ))}
        </MenuGroup>
        <MenuGroup $gap={24}>
          {planMenu.map((m) => (
            <button key={m}>{m}</button>
          ))}
        </MenuGroup>
      </MainMenu>
      <FileTabs>
        <FileTab>
          6*
          <button aria-label="关闭"><X size={11} strokeWidth={3} color="#777" /></button>
        </FileTab>
        <NewTab aria-label="新建"><Plus size={11} /></NewTab>
      </FileTabs>
      <SubMenu>
        {subMenu.map((m) => (
          <button key={m}>{m}</button>
        ))}
      </SubMenu>
      <ToolArea>
        <StandardBar />
        <PropertyBar />
      </ToolArea>
      <Canvas>
        <ViewLabel>二维线框]</ViewLabel>
        <SitePlan />
        <ViewCube />
        <UcsButton>
          未命名
          <ChevronDown size={9} />
        </UcsButton>
        <CommandDock>
          <History $dim>命令:</History>
          <History>命令:</History>
          <CommandBar>
            <CommandHandle>
              <Dots />
              <X size={11} strokeWidth={4} />
              <Wrench size={14} fill="#c8c8c8" style={{ rotate: "-90deg" }} />
            </CommandHandle>
            <Prompt>
              <Ico s={15}><path d="M1 1h16v16H1z" fill="#b5b5b5" stroke="#777" /><path d="M4 5l4 4-4 4M9 13h5" stroke="#333" /></Ico>
              <Ico s={7} stroke="none"><path d="M1 4h16l-8 10z" fill="#666" /></Ico>
              <input aria-label="命令" value={command} onChange={(e) => setCommand(e.target.value)} />
              <Ico s={8} stroke="none"><path d="M0 15h18L9 3z" fill="#111" /></Ico>
            </Prompt>
          </CommandBar>
        </CommandDock>
      </Canvas>
      <LayoutStrip>
        <LayoutTab $w={40} $active>模型</LayoutTab>
        <LayoutTab $w={32}>site</LayoutTab>
        <svg width="8" height="15" viewBox="0 0 8 15"><path d="M1 15L7 0" stroke="#666" strokeWidth="2" /></svg>
        <ScrollTrack>
          <ChevronLeft size={14} strokeWidth={3} />
          <Thumb />
        </ScrollTrack>
      </LayoutStrip>
      <StatusBar>
        <Coords>-189058.83, 0.00</Coords>
        {statusTools.map(([name, on, icon]) => (
          <StatusButton key={name} aria-label={name} $on={on}>{icon}</StatusButton>
        ))}
        <StatusRight>
          <StatusButton $w={30}>模型</StatusButton>
          <StatusButton aria-label="快速查看布局"><Ico><path d="M3 1h11v12H3z" fill="#eee" /><path d="M6 5v5h5zM1 16h16" stroke="#111" /></Ico></StatusButton>
          <StatusButton aria-label="快速查看图形"><Ico><path d="M1 2h7v9H1zM10 2h7v9h-7z" fill="#eee" /><path d="M1 15h16" stroke="#111" strokeWidth="2" /></Ico></StatusButton>
          <Gap $w={18} />
          <StatusButton $w={53}><Ico><path d="M9 1v8M9 4L6 9l-4 7 7-4 7 4-4-7-3-5" fill="#ddd" /></Ico>1:1 <Ico s={9} stroke="none"><path d="M1 3h16l-8 11z" fill="#111" /></Ico></StatusButton>
          <StatusButton $w={23} aria-label="注释可见性"><Ico><path d="M9 1v8M9 4L2 16l7-4 7 4z" fill="#ddd" /><path d="M10 10l5-3-1 4 4 2-5 3z" fill="#f0b840" stroke="none" /></Ico></StatusButton>
          <StatusButton aria-label="自动缩放"><Ico stroke="#8a8a8a"><path d="M9 1v8M9 4L2 16l7-4 7 4z" fill="#bbb" /></Ico></StatusButton>
          <Gap $w={6} />
          <StatusButton aria-label="切换工作空间"><Settings size={18} strokeWidth={1.8} fill="#ddd" /></StatusButton>
          <StatusButton aria-label="锁定"><Ico><path d="M2 8h9v8H2z" fill="#f0f0f0" /><path d="M6 11v3" strokeWidth="2" /><path d="M9 8V4q0-3 4-3t4 3v4h-2V5q0-2-2-2t-2 2v3" fill="#eee" /></Ico></StatusButton>
          <StatusButton aria-label="硬件加速"><Ico stroke="#888"><circle cx="9" cy="9" r="6" fill="#777" /><path d="M4 2l6 8" stroke="#ddd" strokeWidth="2" /></Ico></StatusButton>
          <StatusButton $w={13} aria-label="全屏显示" />
        </StatusRight>
      </StatusBar>

      <Balloon>
        <BalloonShape width="156" height="104" viewBox="0 0 156 104">
          <path d="M170 .5H16L.5 15V70L16 85.5H137L158 106" fill="#fdfbdc" stroke="#111" strokeLinejoin="round" />
        </BalloonShape>
        <BalloonText>
          <h2>
            <svg width="16" height="16" viewBox="0 0 16 16">
              <circle cx="8" cy="8" r="7.5" fill="#2b55c0" stroke="#8fa5d8" />
              <path d="M8 3v2M6 7h2v5M6 12h4" stroke="#fff" strokeWidth="2" />
            </svg>
            完成打印和发布作业
          </h2>
          <p>未发现错误或警告</p>
          <a href="#details">单击以查看打印和发布详细信息</a>
        </BalloonText>
      </Balloon>

      {warningOpen && (
        <Overlay>
          <Dialog role="alertdialog" aria-labelledby="warning-title">
            <h1 id="warning-title">AutoCAD 警告</h1>
            <DialogBody>
              <svg width="30" height="30" viewBox="0 0 30 30">
                <path d="M15 2L28 27H2z" fill="#f9b51f" stroke="#f9b51f" strokeWidth="3" strokeLinejoin="round" />
                <path d="M15 8v11M15 22v3" stroke="#4a3208" strokeWidth="2.4" />
              </svg>
              <p>
                {"HP LaserJet 5000LE PCL 6.pc3: 无法使用此绘图仪配置，原因可能包括: 找不\n到驱动程序，找不到设备，或者驱动程序有问题。已替换为“无”打印设备。"}
              </p>
            </DialogBody>
            <DialogFooter>
              <OkButton onClick={() => setWarningOpen(false)}>确定</OkButton>
            </DialogFooter>
          </Dialog>
          <Cursor width="14" height="20" viewBox="0 0 14 20">
            <path d="M1 1v15l3.500-3 2.500 6 3-1-3-6h5z" fill="#fff" stroke="#444" />
          </Cursor>
        </Overlay>
      )}
    </Page>
  );
}

export default App;
